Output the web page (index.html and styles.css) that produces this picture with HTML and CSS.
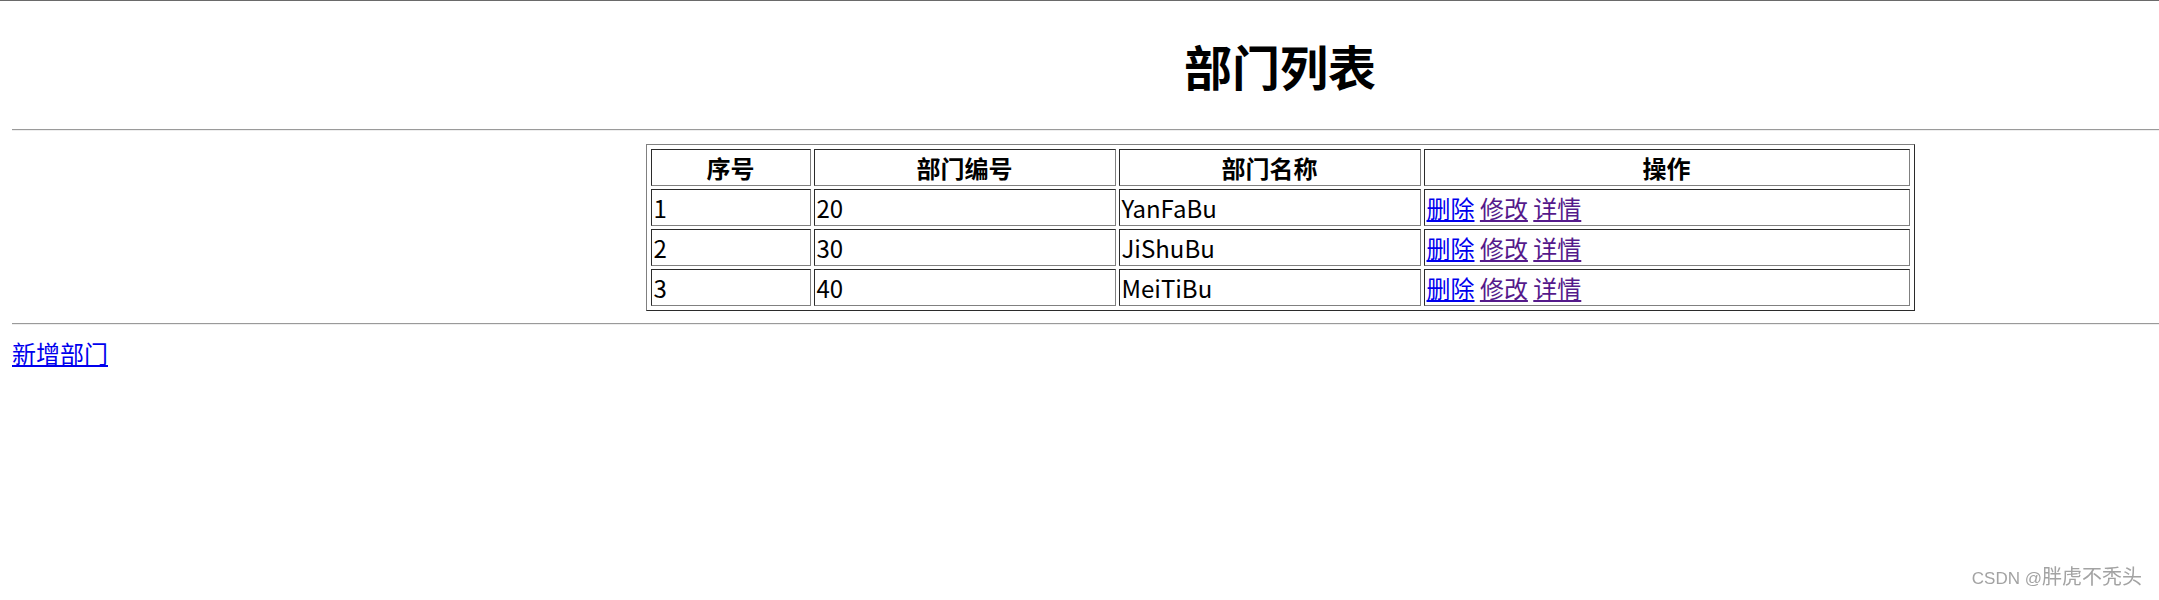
FILE: index.html
```html
<!DOCTYPE html>
<html lang="zh-CN">
<head>
<meta charset="utf-8">
<title>部门列表</title>
<link rel="stylesheet" href="styles.css">
</head>
<body>
<h1 class="title">部门列表</h1>
<hr class="rule rule-top">
<table class="dept-table">
  <colgroup>
    <col class="c-no">
    <col class="c-code">
    <col class="c-name">
    <col class="c-op">
  </colgroup>
  <thead>
    <tr><th>序号</th><th>部门编号</th><th>部门名称</th><th>操作</th></tr>
  </thead>
  <tbody>
    <tr><td>1</td><td>20</td><td>YanFaBu</td><td><a class="lnk" href="#">删除</a> <a class="lnk visited" href="#">修改</a> <a class="lnk visited" href="#">详情</a></td></tr>
    <tr><td>2</td><td>30</td><td>JiShuBu</td><td><a class="lnk" href="#">删除</a> <a class="lnk visited" href="#">修改</a> <a class="lnk visited" href="#">详情</a></td></tr>
    <tr><td>3</td><td>40</td><td>MeiTiBu</td><td><a class="lnk" href="#">删除</a> <a class="lnk visited" href="#">修改</a> <a class="lnk visited" href="#">详情</a></td></tr>
  </tbody>
</table>
<hr class="rule rule-bottom">
<a class="lnk add-link" href="#">新增部门</a>
<div class="watermark"><span class="wm-latin">CSDN @</span>胖虎不秃头</div>
</body>
</html>
```
FILE: styles.css
```css
html {
  overflow: hidden;
  border-top: 1px solid #6a6a6a;
  background: #fff;
}
body {
  margin: 0 12px 12px;
  padding-top: 0;
  width: 2536px;
  font-family: "Microsoft YaHei", "Noto Sans CJK SC", sans-serif;
  font-size: 24px;
  line-height: 32px;
  color: #000;
}
.title {
  font-size: 48px;
  line-height: 64px;
  font-weight: bold;
  text-align: center;
  margin: 32px 0;
}
.rule {
  height: 0;
  margin: 0;
  border: none;
  border-top: 1px solid #9a9a9a;
  border-bottom: 1px solid #eeeeee;
}
.rule-top {
  margin-bottom: 13px;
}
.rule-bottom {
  margin-top: 12px;
  margin-bottom: 12px;
}
.dept-table {
  table-layout: fixed;
  width: 1269px;
  margin: 0 auto;
  border-collapse: separate;
  border-spacing: 3px;
  padding: 1px;
  border: 1px solid;
  border-color: #808080 #2b2b2b #2b2b2b #808080;
}
.c-no { width: 160px; }
.c-code { width: 302px; }
.c-name { width: 302px; }
.c-op { width: 486px; }
.dept-table th,
.dept-table td {
  border: 1px solid;
  border-color: #2b2b2b #808080 #808080 #2b2b2b;
  padding: 1px 2px;
  height: 33px;
  line-height: 33px;
  font-size: 24px;
}
.dept-table th {
  font-weight: bold;
  text-align: center;
}
.dept-table td {
  text-align: left;
}
.lnk {
  color: #0000ee;
  text-decoration: underline;
}
.lnk.visited {
  color: #551a8b;
}
.watermark {
  position: fixed;
  right: 17px;
  bottom: 9px;
  font-family: "Liberation Sans", "Noto Sans CJK SC", sans-serif;
  font-size: 20px;
  line-height: 24px;
  color: #a3a3a3;
  text-shadow: 0 0 1px #ffffff;
}
.wm-latin {
  font-size: 17px;
}
```
